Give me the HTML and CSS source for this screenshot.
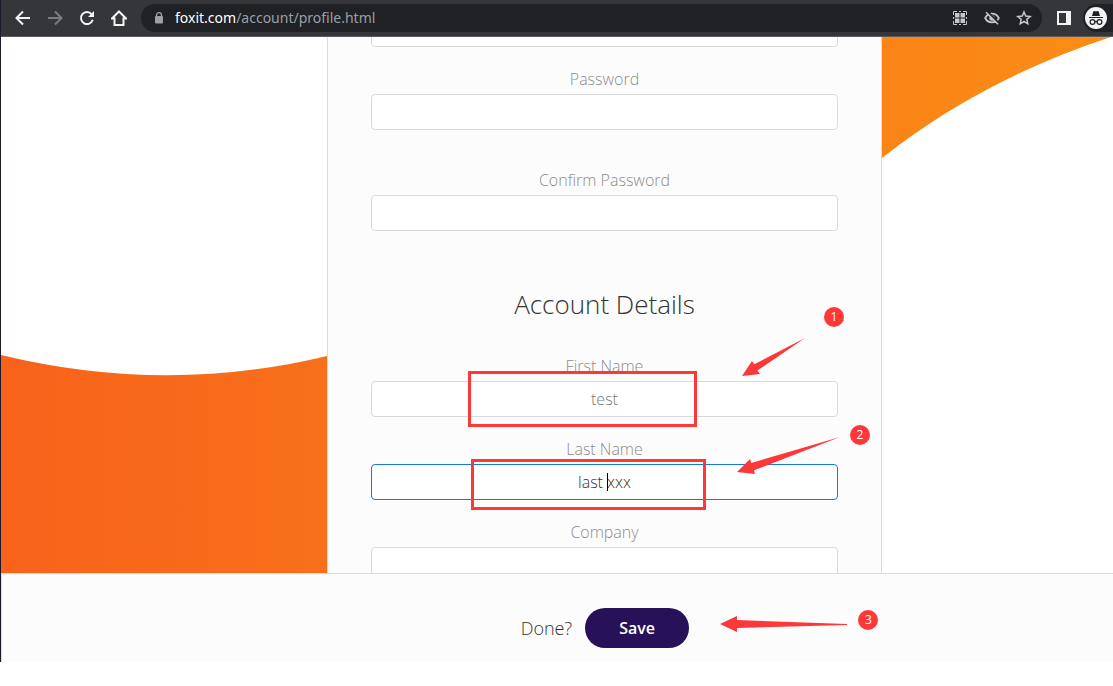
FILE: index.html
```
<!DOCTYPE html>
<html lang="en">

<head>
    <meta charset="UTF-8">
    <meta name="viewport" content="width=device-width, initial-scale=1.0">
    <title>Account Profile</title>

    <link rel="stylesheet" href="styles.css">
</head>

<body>
    <div class="browser">
        <header class="toolbar">
            <nav class="toolbar-nav">
                <button type="button" aria-label="Back">
                    <svg width="16" height="16" viewBox="0 0 16 16" fill="none" stroke="#f1f3f4" stroke-width="2"><path d="M15 8H2M8 1.5L1.5 8L8 14.5" /></svg>
                </button>
                <button type="button" aria-label="Forward">
                    <svg width="16" height="16" viewBox="0 0 16 16" fill="none" stroke="#7b7c7f" stroke-width="2"><path d="M1 8H14M8 1.5L14.5 8L8 14.5" /></svg>
                </button>
                <button type="button" aria-label="Reload">
                    <svg width="16" height="16" viewBox="0 0 16 16"><path d="M12.6 4.2A6 6 0 1 0 13.7 9.8" fill="none" stroke="#f1f3f4" stroke-width="2" /><path d="M15 1V7H9Z" fill="#f1f3f4" /></svg>
                </button>
                <button type="button" aria-label="Home">
                    <svg width="16" height="16" viewBox="0 0 16 16" fill="none" stroke="#f1f3f4" stroke-width="2"><path d="M1 8.5H3.5V15H12.5V8.5H15L8 1.5Z" /></svg>
                </button>
            </nav>
            <div class="address">
                <svg width="10" height="12" viewBox="0 0 10 12"><path d="M2.5 5V3A2.5 2.3 0 0 1 7.5 3V5" fill="none" stroke="#9aa0a6" stroke-width="1.3" /><rect x="1" y="4" width="8" height="7.5" rx="1" fill="#9aa0a6" /></svg>
                <p class="url"><b>foxit.com</b>/account/profile.html</p>
                <button type="button" aria-label="QR code">
                    <svg width="16" height="16" viewBox="0 0 16 16"><path d="M1.5 5V1.5H5M7 1.5H9M11 1.5H14.5V5M14.5 7V9M14.500 11V14.5H11M9 14.5H7M5 14.5H1.5V11M1.5 9V7" fill="none" stroke="#c4c7c9" /><path d="M3 3H7.500V7.500H3ZM8.500 3H13V7.500H8.500ZM3 8.500H7.500V13H3ZM8.500 8.500H13V13H8.500Z" fill="#c4c7c9" /></svg>
                </button>
                <button type="button" aria-label="Third-party cookies blocked">
                    <svg width="16" height="16" viewBox="0 0 16 16"><path d="M1.2 8C4 2.2 12 2.2 14.8 8C12 13.8 4 13.8 1.2 8Z" fill="none" stroke="#c4c7c9" stroke-width="1.8" /><circle cx="8" cy="8" r="2.7" fill="#c4c7c9" /><path d="M3.2 1.5L15 13.3" stroke="#202124" stroke-width="2" /><path d="M2 2.2L14 14.2" stroke="#c4c7c9" stroke-width="1.6" /></svg>
                </button>
                <button type="button" aria-label="Bookmark this page">
                    <svg width="16" height="16" viewBox="0 0 16 16"><path d="M8 2L9.700 6.1L14.2 6.5L10.8 9.4L11.8 13.8L8 11.5L4.2 13.8L5.2 9.4L1.8 6.5L6.3 6.1Z" fill="none" stroke="#c4c7c9" stroke-width="1.5" /></svg>
                </button>
            </div>
            <button type="button" aria-label="Side panel">
                <svg width="14" height="14" viewBox="0 0 14 14"><path d="M0 0H14V14H0ZM2 2V12H9V2Z" fill="#f1f3f4" fill-rule="evenodd" /></svg>
            </button>
            <button type="button" class="incognito" aria-label="Incognito">
                <svg width="22" height="22" viewBox="0 0 22 22"><circle cx="11" cy="11" r="11" fill="#f1f3f4" /><path d="M7 9L8.3 4.5Q8.6 4 9.2 4.1L11 4.5L12.8 4.1Q13.4 4 13.7 4.5L15 9Z" fill="#202124" /><path d="M4 10.500H18" stroke="#202124" /><g fill="none" stroke="#202124" stroke-width="1.2"><circle cx="7.5" cy="15" r="2.4" /><circle cx="14.5" cy="15" r="2.4" /><path d="M10 15Q11 14 12 15" /></g></svg>
            </button>
        </header>

        <main class="page">
            <div class="wave">
                <svg viewBox="0 0 326 536" preserveAspectRatio="none">
                    <defs>
                        <linearGradient id="waveLeft"><stop offset="0" stop-color="#f8621b" /><stop offset="1" stop-color="#f7701a" /></linearGradient>
                    </defs>
                    <path d="M0 318Q165 358 326 319V536H0Z" fill="url(#waveLeft)" />
                </svg>
            </div>
            <form class="panel" id="profile">
                <div class="field">
                    <input type="email" id="email" aria-label="Email">
                </div>
                <div class="field field-wide">
                    <label for="password">Password</label>
                    <input type="password" id="password">
                </div>
                <div class="field field-wide">
                    <label for="confirm">Confirm Password</label>
                    <input type="password" id="confirm">
                </div>
                <h2>Account Details</h2>
                <div class="field">
                    <label for="firstName">First Name</label>
                    <input type="text" id="firstName" value="test">
                </div>
                <div class="field">
                    <label for="lastName">Last Name</label>
                    <input type="text" id="lastName" class="active" value="last xxx">
                    <span class="caret"></span>
                </div>
                <div class="field">
                    <label for="company">Company</label>
                    <input type="text" id="company">
                </div>

                <!-- step marks -->
                <svg class="marks" width="553" height="536" viewBox="328 37 553 536">
                    <rect x="469.5" y="372.5" width="226" height="53" fill="none" stroke="#fc3838" stroke-width="3" />
                    <rect x="472.5" y="460.5" width="232" height="48" fill="none" stroke="#fc3838" stroke-width="3" />
                    <path d="M742 376L752 361L754.3 364.3L805 338L757.5 370.5L760 374Z" fill="#fc3838" />
                    <path d="M737 472L750 459L751.3 463L840 437L754 470.3L755 474Z" fill="#fc3838" />
                </svg>
                <span class="badge badge-1">1</span>
                <span class="badge badge-2">2</span>
            </form>
            <div class="wave">
                <svg viewBox="0 0 231 536" preserveAspectRatio="none">
                    <defs>
                        <linearGradient id="waveRight"><stop offset="0" stop-color="#fa8416" /><stop offset="1" stop-color="#fb8d15" /></linearGradient>
                    </defs>
                    <path d="M0 121Q98 43 229 0H0Z" fill="url(#waveRight)" />
                </svg>
            </div>
        </main>

        <footer class="save-bar">
            <div class="save-wrap">
                <p>Done?</p>
                <button type="submit" form="profile" class="btn-save">Save</button>
                <svg class="arrow" width="128" height="16" viewBox="720 616 128 16"><path d="M720 624L737 616V620L847 624V625L737 628V632Z" fill="#fc3838" /></svg>
                <span class="badge badge-3">3</span>
            </div>
        </footer>
    </div>
</body>

</html>
```
FILE: styles.css
```
/* common */
* {
    box-sizing: border-box;
}

body,
h2,
p {
    margin: 0;
}

body {
    height: 100vh;
    padding-bottom: 24px;
    background: #fff;
    font-family: "Open Sans", "Noto Sans", sans-serif;
    font-size: 16px;
    font-weight: 300;
    overflow: hidden;
}

button {
    display: flex;
    padding: 0;
    border: 0;
    background: transparent;
    cursor: pointer;
}

svg {
    display: block;
    flex-shrink: 0;
}

.browser {
    display: flex;
    flex-direction: column;
    height: 100%;
    border-left: 1px solid #1c1a2b;
}

/* toolbar */
.toolbar {
    display: flex;
    align-items: center;
    height: 37px;
    padding-left: 14px;
    border-bottom: 1px solid #5a5a5e;
    background: #35363a;
}

.toolbar-nav {
    display: flex;
    gap: 16px;
}

.address {
    display: flex;
    flex: 1;
    align-items: center;
    gap: 16px;
    height: 28px;
    margin: 0 15px 0 14px;
    padding: 0 10px 0 13px;
    border-radius: 14px;
    background: #202124;
}

.url {
    flex: 1;
    margin-left: -5px;
    color: #9aa0a6;
    font-family: "Noto Sans", sans-serif;
    font-size: 14px;
    font-weight: 400;
    line-height: 20px;
}

.url b {
    color: #fff;
    font-weight: 400;
}

.incognito {
    align-items: center;
    height: 28px;
    margin-left: 12px;
    padding: 0 6px 0 2px;
    border-radius: 14px 0 0 14px;
    background: #202124;
}

/* page */
.page,
.save-bar {
    display: grid;
    grid-template-columns: 326fr 555px 231fr;
}

.page {
    flex: 1;
    min-height: 0;
    overflow: hidden;
}

.wave {
    min-height: 0;
}

.wave svg {
    width: 100%;
    height: 100%;
}

.panel {
    position: relative;
    min-height: 0;
    padding: 0 43px;
    border: solid #dcdcdc;
    border-width: 0 1px;
    background: #fcfcfc;
    text-align: center;
}

/* the form is scrolled, only the end of the first field shows */
.field:first-child {
    margin-top: -26px;
}

.field {
    position: relative;
    margin-bottom: 22px;
}

.field-wide {
    margin-bottom: 40px;
}

.field label {
    display: block;
    margin-bottom: 5px;
    color: #8c8c8c;
    line-height: 20px;
}

.field input {
    display: block;
    width: 100%;
    height: 36px;
    padding: 0 10px;
    border: 1px solid #d9d9d9;
    border-radius: 4px;
    outline: 0;
    background: #fff;
    color: #777;
    font: inherit;
    text-align: center;
}

.field .active {
    border-color: #1579d8;
    color: #333;
}

.caret {
    position: absolute;
    left: 236px;
    bottom: 9px;
    width: 1px;
    height: 18px;
    background: #000;
}

.panel h2 {
    margin: 55px 0 34px;
    color: #333;
    font-size: 26px;
    font-weight: 300;
    line-height: 36px;
}

/* step marks */
.marks {
    position: absolute;
    top: 0;
    left: 0;
    pointer-events: none;
}

.badge {
    position: absolute;
    width: 20px;
    height: 20px;
    border-radius: 50%;
    background: #fc3838;
    color: #fff;
    font-size: 12px;
    font-weight: 400;
    line-height: 20px;
    text-align: center;
}

.badge-1 {
    top: 270px;
    left: 496px;
}

.badge-2 {
    top: 388px;
    left: 522px;
}

.badge-3 {
    top: 2px;
    right: 4px;
}

/* save bar */
.save-bar {
    padding: 34px 0 14px;
    border-top: 1px solid #dcdcdc;
    border-left: 1px solid #dcdcdc;
    background: #fcfcfc;
}

.save-wrap {
    position: relative;
    display: flex;
    grid-column: 2;
    align-items: center;
    justify-content: center;
    gap: 13px;
    color: #333;
    font-size: 18px;
}

.btn-save {
    justify-content: center;
    width: 104px;
    border-radius: 20px;
    background: #271158;
    color: #fff;
    font-family: inherit;
    font-size: 16px;
    font-weight: 600;
    line-height: 40px;
}

.arrow {
    position: absolute;
    top: 8px;
    left: 393px;
}
```
